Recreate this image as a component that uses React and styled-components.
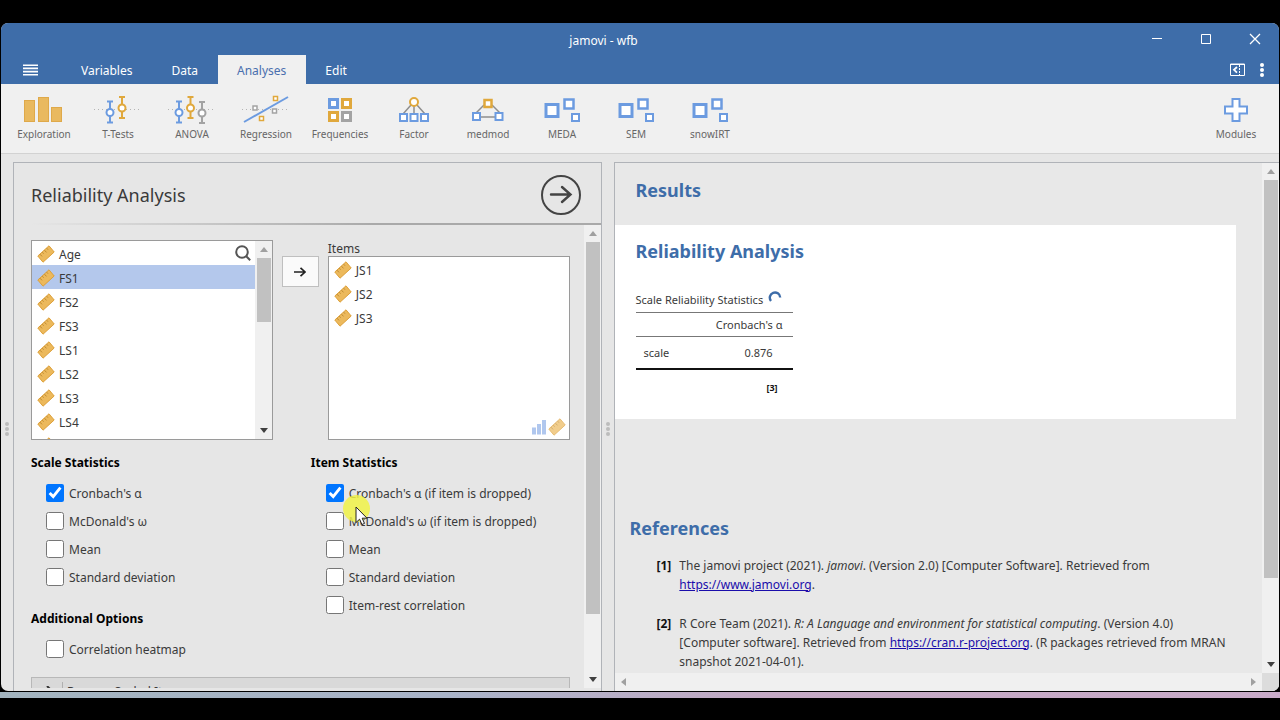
import {useState} from 'react'
import styled, {createGlobalStyle, css} from 'styled-components'

const BLUE = '#6c9be0'
const GOLD = '#e0a83c'
const GREY = '#a3a3a3'

const TABS = ['Variables', 'Data', 'Analyses', 'Edit']

const VARIABLES = ['Age', 'FS1', 'FS2', 'FS3', 'LS1', 'LS2', 'LS3', 'LS4', 'LS5']

const ITEMS = ['JS1', 'JS2', 'JS3']

const SCALE_OPTIONS = [
  {id: 'alphaScale', label: "Cronbach's α", checked: true},
  {id: 'omegaScale', label: "McDonald's ω"},
  {id: 'meanScale', label: 'Mean'},
  {id: 'sdScale', label: 'Standard deviation'},
]

const ITEM_OPTIONS = [
  {id: 'alphaItems', label: "Cronbach's α (if item is dropped)", checked: true},
  {id: 'omegaItems', label: "McDonald's ω (if item is dropped)"},
  {id: 'meanItems', label: 'Mean'},
  {id: 'sdItems', label: 'Standard deviation'},
  {id: 'itemRestCor', label: 'Item-rest correlation'},
]

const ADDITIONAL_OPTIONS = [
  {id: 'corPlot', label: 'Correlation heatmap'},
]

function Whisker({x, y, color}) {
  return (
      <g stroke={color} strokeWidth="2" fill="#fff">
        <path d={`M${x} ${y}v21M${x - 3} ${y}h6M${x - 3} ${y + 21}h6`}/>
        <circle cx={x} cy={y + 11} r="3.5"/>
      </g>
  )
}

function Box({x, y, size, color, width = 2}) {
  return <rect x={x} y={y} width={size} height={size} fill="#fff" stroke={color} strokeWidth={width}/>
}

function Dotted() {
  return <path d="M0 14.5h48" stroke="#b4b4b4" strokeDasharray="1 3"/>
}

const ModuleBoxes = () => (
    <>
      <Box x={8} y={9.5} size={12} color={BLUE} width={3}/>
      <Box x={26.5} y={4.5} size={9} color={BLUE} width={2.5}/>
      <Box x={34} y={19} size={7} color={BLUE}/>
    </>
)

const MODULES = [
  {
    name: 'Exploration',
    art: <g fill="#e9b95f" stroke="#dfa94a">
      <rect x="4.5" y="5.5" width="10" height="21"/>
      <rect x="18.5" y="2.5" width="10" height="24"/>
      <rect x="31.5" y="12.5" width="10" height="14"/>
    </g>
  },
  {
    name: 'T-Tests',
    art: <><Dotted/><Whisker x={16} y={6.5} color={BLUE}/><Whisker x={28} y={2} color={GOLD}/></>
  },
  {
    name: 'ANOVA',
    art: <>
      <Dotted/>
      <Whisker x={11} y={6.5} color={BLUE}/>
      <Whisker x={22.5} y={2} color={GOLD}/>
      <Whisker x={34} y={7} color={GREY}/>
    </>
  },
  {
    name: 'Regression',
    art: <>
      <Dotted/>
      <path d="M2 27L46 2" stroke={BLUE} strokeWidth="2"/>
      <Box x={31.5} y={1.5} size={4} color={GOLD} width={1.5}/>
      <Box x={11} y={11} size={4} color={GREY} width={1.5}/>
      <Box x={30.5} y={14} size={4} color={GREY} width={1.5}/>
      <Box x={17.5} y={21.5} size={4} color={GOLD} width={1.5}/>
    </>
  },
  {
    name: 'Frequencies',
    art: <>
      <Box x={13.5} y={4.5} size={8} color={BLUE} width={3}/>
      <Box x={26.5} y={4.5} size={8} color={GOLD} width={3}/>
      <Box x={13.5} y={17.5} size={8} color={GOLD} width={3}/>
      <Box x={26.5} y={17.5} size={8} color={GREY} width={3}/>
    </>
  },
  {
    name: 'Factor',
    art: <>
      <path d="M24 10v9M21 10L13 19M27 10l8 9" stroke="#8f8f8f" strokeWidth="1.5"/>
      <circle cx="24" cy="7" r="4" fill="#fff" stroke={GOLD} strokeWidth="2"/>
      <Box x={10} y={19} size={7} color={BLUE}/>
      <Box x={20.5} y={19} size={7} color={BLUE}/>
      <Box x={31} y={19} size={7} color={BLUE}/>
    </>
  },
  {
    name: 'medmod',
    art: <>
      <path d="M20 10l-8 8M28 10l8 8M16 22h15" stroke="#8f8f8f" strokeWidth="1.5"/>
      <Box x={20.5} y={5} size={7} color={GOLD} width={2.5}/>
      <Box x={9} y={18} size={7} color={BLUE}/>
      <Box x={31.5} y={18} size={7} color={BLUE}/>
    </>
  },
  {name: 'MEDA', art: <ModuleBoxes/>},
  {name: 'SEM', art: <ModuleBoxes/>},
  {name: 'snowIRT', art: <ModuleBoxes/>},
]

function RibbonItem({name, art}) {
  return (
      <RibbonButton>
        <svg width="48" height="30" viewBox="0 0 48 30" fill="none">{art}</svg>
        {name}
      </RibbonButton>
  )
}

function RulerIcon() {
  return (
      <svg width="18" height="18" viewBox="0 0 18 18">
        <path d="M0.8 11L12 0.8 17.2 7 6 17.2z" fill="#ecb95c" stroke="#dda03a"/>
        <path d="M3 9.2l2 2.2M5.3 7.2l1.3 1.5M7.5 5.2l2 2.2M9.7 3.2L11 4.7" stroke="#b9842c" strokeWidth="0.9"/>
      </svg>
  )
}

function OrdinalIcon() {
  return (
      <svg width="16" height="16" viewBox="0 0 16 16" fill="#8fb0e8">
        <path d="M1 8.5h4v7H1zM6 5h4v10.5H6zM11 1h4v14.5h-4z"/>
      </svg>
  )
}

function Scrollbar({thumb, start = true, end = true}) {
  return (
      <Track>
        <Arrow $active={!start}><svg width="8" height="5"><path d="M0 5l4-5 4 5z"/></svg></Arrow>
        <Slot><Thumb style={{height: thumb}}/></Slot>
        <Arrow $active={end}><svg width="8" height="5"><path d="M0 0l4 5 4-5z"/></svg></Arrow>
      </Track>
  )
}

function OptionGroup({title, options}) {
  return (
      <Group>
        <legend>{title}</legend>
        {options.map(o => (
            <Option key={o.id} htmlFor={o.id}>
              <input type="checkbox" id={o.id} defaultChecked={o.checked}/>
              {o.label}
            </Option>
        ))}
      </Group>
  )
}

function Variable({name, selected, onClick}) {
  return (
      <VariableRow $selected={selected} onClick={onClick}>
        <RulerIcon/>{name}
      </VariableRow>
  )
}

function Options() {
  const [selected, setSelected] = useState('FS1')

  return (
      <OptionsPanel>
        <OptionsHeader>
          <h1>Reliability Analysis</h1>
          <RoundButton aria-label="Close options">
            <svg width="40" height="40" viewBox="0 0 40 40" fill="none" stroke="#444">
              <circle cx="20" cy="20" r="19" strokeWidth="2"/>
              <path d="M10 19.5h19M21 12l8.5 7.5L21 27" strokeWidth="2.4" strokeLinecap="round"/>
            </svg>
          </RoundButton>
        </OptionsHeader>
        <Divider/>
        <ScrollRow>
          <OptionsBody>
            <Supplier>
              <ListBox>
                <List>
                  {VARIABLES.map(v => (
                      <Variable key={v} name={v} selected={v === selected} onClick={() => setSelected(v)}/>
                  ))}
                </List>
                <SearchButton aria-label="Search">
                  <svg width="16" height="16" viewBox="0 0 16 16" fill="none" stroke="#555" strokeWidth="2">
                    <circle cx="7" cy="7" r="5.8"/>
                    <path d="M11 11l4.2 4.2"/>
                  </svg>
                </SearchButton>
                <Scrollbar thumb="64px"/>
              </ListBox>
              <MoveButton aria-label="Move to Items">
                <svg width="12" height="10" viewBox="0 0 12 10" fill="none" stroke="#222" strokeWidth="1.7">
                  <path d="M0 5h11M6.5 0.8L11 5 6.5 9.2"/>
                </svg>
              </MoveButton>
              <Target>
                <TargetLabel>Items</TargetLabel>
                <ListBox>
                  <List>
                    {ITEMS.map(v => <Variable key={v} name={v}/>)}
                  </List>
                  <Permitted><OrdinalIcon/><RulerIcon/></Permitted>
                </ListBox>
              </Target>
            </Supplier>
            <Columns>
              <div>
                <OptionGroup title="Scale Statistics" options={SCALE_OPTIONS}/>
                <OptionGroup title="Additional Options" options={ADDITIONAL_OPTIONS}/>
              </div>
              <OptionGroup title="Item Statistics" options={ITEM_OPTIONS}/>
            </Columns>
            <Collapse>
              <svg width="8" height="10" viewBox="0 0 8 10" fill="none" stroke="#333" strokeWidth="2">
                <path d="M1 0l5 5-5 5"/>
              </svg>
              <span>Reverse Scaled Items</span>
            </Collapse>
          </OptionsBody>
          <Scrollbar thumb="372px"/>
        </ScrollRow>
      </OptionsPanel>
  )
}

function Results() {
  return (
      <ResultsPanel>
        <ScrollRow>
          <ResultsBody>
            <ResultsTitle>Results</ResultsTitle>
            <Card>
              <Heading>Reliability Analysis</Heading>
              <Table>
                <caption>
                  Scale Reliability Statistics
                  <svg width="14" height="14" viewBox="0 0 14 14" fill="none" stroke="#3e6da9" strokeWidth="2.4">
                    <path d="M3 11A5.2 5.2 0 1 1 12.2 7.5"/>
                  </svg>
                </caption>
                <thead>
                  <tr><th/><th>Cronbach's α</th></tr>
                </thead>
                <tbody>
                  <tr><td>scale</td><td>0.876</td></tr>
                </tbody>
                <tfoot>
                  <tr><td colSpan="2">[3]</td></tr>
                </tfoot>
              </Table>
            </Card>
            <References>
              <Heading>References</Heading>
              <Reference>
                <b>[1]</b>
                <p>The jamovi project (2021). <i>jamovi</i>. (Version 2.0) [Computer Software]. Retrieved
                  from <a href="https://www.jamovi.org">https://www.jamovi.org</a>.</p>
              </Reference>
              <Reference>
                <b>[2]</b>
                <p>R Core Team (2021). <i>R: A Language and environment for statistical computing</i>. (Version 4.0)
                  [Computer software]. Retrieved from <a href="https://cran.r-project.org">https://cran.r-project.org</a>.
                  (R packages retrieved from MRAN snapshot 2021-04-01).</p>
              </Reference>
            </References>
          </ResultsBody>
          <Scrollbar thumb="398px"/>
        </ScrollRow>
        <HorizontalBar>
          <svg width="5" height="8"><path d="M5 0L0 4l5 4z"/></svg>
          <svg width="5" height="8"><path d="M0 0l5 4-5 4z"/></svg>
        </HorizontalBar>
      </ResultsPanel>
  )
}

export default function App() {
  return (
      <Desktop>
        <GlobalStyle/>
        <Window>
          <TitleBar>
            <WindowTitle>jamovi - wfb</WindowTitle>
            <WindowButton aria-label="Minimize">
              <svg width="12" height="12"><path d="M1 5.5h10"/></svg>
            </WindowButton>
            <WindowButton aria-label="Maximize">
              <svg width="12" height="12"><path d="M1.5 1.5h9v9h-9z"/></svg>
            </WindowButton>
            <WindowButton aria-label="Close">
              <svg width="12" height="12"><path d="M1 1l10 10M11 1L1 11" strokeWidth="1.3"/></svg>
            </WindowButton>
          </TitleBar>
          <TabBar>
            <MenuButton aria-label="Menu">
              <svg width="15" height="12" viewBox="0 0 15 12">
                <path d="M0 1.2h15M0 4.4h15M0 7.6h15M0 10.8h15"/>
              </svg>
            </MenuButton>
            {TABS.map(t => <Tab key={t} $active={t === 'Analyses'}>{t}</Tab>)}
            <TabTools>
              <button aria-label="Toggle results">
                <svg width="15" height="13" viewBox="0 0 15 13">
                  <path d="M0.5 1h14v11.5h-14zM0 1.5h15" strokeWidth="1"/>
                  <path d="M9.5 2v11" strokeDasharray="2 1"/>
                  <path d="M7 4L4 6.8l3 2.8" strokeWidth="1.8"/>
                </svg>
              </button>
              <button aria-label="More">
                <svg width="4" height="14" viewBox="0 0 4 14">
                  <g fill="#fff" stroke="none">
                    <circle cx="2" cy="2" r="2"/>
                    <circle cx="2" cy="7" r="2"/>
                    <circle cx="2" cy="12" r="2"/>
                  </g>
                </svg>
              </button>
            </TabTools>
          </TabBar>
          <Ribbon>
            {MODULES.map(m => <RibbonItem key={m.name} name={m.name} art={m.art}/>)}
            <Spacer/>
            <RibbonItem
                name="Modules"
                art={<path d="M20.5 4h7v7.5H35v7h-7.5V26h-7v-7.5H13v-7h7.5z" fill="#fff" stroke={BLUE} strokeWidth="2"/>}
            />
          </Ribbon>
          <Main>
            <Splitter><i/><i/><i/></Splitter>
            <Options/>
            <Splitter><i/><i/><i/></Splitter>
            <Results/>
          </Main>
        </Window>
        <Wallpaper/>
        <Pointer>
          <svg width="14" height="20" viewBox="0 0 14 20">
            <path d="M1 1v15.5l3.6-3.3 2.3 5.3 2.6-1.1-2.3-5.2H12z" fill="#fff" stroke="#222"/>
          </svg>
        </Pointer>
      </Desktop>
  )
}

const GlobalStyle = createGlobalStyle`
  * {
    box-sizing: border-box;
  }

  body {
    margin: 0;
    background: #000;
    color: #3a3a3a;
    font-family: "Noto Sans", "Open Sans", sans-serif;
    font-size: 12px;
    line-height: 19px;
  }

  button {
    font: inherit;
    color: inherit;
    padding: 0;
    border: 0;
    background: none;
  }

  h1, h2, p {
    margin: 0;
  }

  svg {
    display: block;
    flex-shrink: 0;
  }
`

const Desktop = styled.div`
  position: relative;
  display: flex;
  flex-direction: column;
  height: 100vh;
  padding: 23px 0 22px;
`
const Window = styled.div`
  display: flex;
  flex-direction: column;
  flex: 1;
  min-height: 0;
  margin: 0 1px;
  border-radius: 7px;
  overflow: hidden;
  background: #e6e6e6;
`
const Wallpaper = styled.div`
  height: 6px;
  margin-top: 1px;
  background: linear-gradient(90deg, #a3b4bf, #a9b3c8 35%, #c4a9c4 60%, #c8aac8);
`
const TitleBar = styled.header`
  display: flex;
  height: 32px;
  padding-left: 74px;
  background: #3e6da9;
  color: #fff;
`
const WindowTitle = styled.div`
  flex: 1;
  text-align: center;
  line-height: 35px;
`
const WindowButton = styled.button`
  display: flex;
  align-items: center;
  justify-content: center;
  width: 49px;

  svg {
    fill: none;
    stroke: #fff;
  }
`
const TabBar = styled.nav`
  display: flex;
  height: 29px;
  background: #3e6da9;
  color: #fff;
`
const MenuButton = styled.button`
  width: 61px;
  padding-left: 22px;

  svg {
    stroke: #fff;
    stroke-width: 1.6;
  }
`
const Tab = styled.button`
  padding: 1px 20px 0 19px;

  ${p => p.$active && css`
    background: #f0f0f0;
    color: #4a6fae;
  `}
`
const TabTools = styled.div`
  display: flex;
  gap: 15px;
  margin-left: auto;
  padding-right: 15px;

  svg {
    fill: none;
    stroke: #fff;
  }
`
const Ribbon = styled.div`
  display: flex;
  height: 70px;
  padding: 0 6px;
  background: #f0f0f0;
  border-bottom: 1px solid #d2d2d2;
`
const RibbonButton = styled.button`
  display: flex;
  flex-direction: column;
  align-items: center;
  width: 74px;
  padding-top: 11px;
  font-size: 10px;
  line-height: 18px;
  color: #666;
`
const Spacer = styled.div`
  flex: 1;
`
const Main = styled.main`
  display: flex;
  flex: 1;
  min-height: 0;
  padding-top: 8px;
`
const Splitter = styled.div`
  display: flex;
  flex-direction: column;
  align-items: center;
  justify-content: center;
  gap: 1px;
  flex: 0 0 12px;
  padding-top: 4px;

  i {
    width: 4px;
    height: 4px;
    border-radius: 50%;
    background: #bcbcbc;
  }
`
const OptionsPanel = styled.section`
  display: flex;
  flex-direction: column;
  flex: 587 0 0;
  min-width: 0;
  padding-bottom: 3px;
  border: 1px solid #b0b3b8;
  border-bottom: 0;
`
const OptionsHeader = styled.div`
  display: flex;
  align-items: center;
  justify-content: space-between;
  height: 60px;
  padding: 4px 20px 0 17px;

  h1 {
    font-size: 18px;
    font-weight: 400;
    line-height: 26px;
  }
`
const RoundButton = styled.button`
  border-radius: 50%;
`
const Divider = styled.div`
  height: 2px;
  margin-left: 17px;
  background: linear-gradient(90deg, #e6e6e6, #a9a9a9 60%);
`
const ScrollRow = styled.div`
  display: flex;
  flex: 1;
  min-height: 0;
`
const OptionsBody = styled.div`
  flex: 1;
  min-width: 0;
  overflow: hidden;
  padding: 15px 14px 0 17px;
`
const Supplier = styled.div`
  display: grid;
  grid-template-columns: 1fr 55px 1fr;
  height: 200px;
`
const ListBox = styled.div`
  position: relative;
  display: flex;
  flex: 1;
  min-height: 0;
  background: #fff;
  border: 1px solid #9a9a9a;
`
const List = styled.ul`
  flex: 1;
  margin: 0;
  padding: 0;
  overflow: hidden;
  list-style: none;
`
const VariableRow = styled.li`
  display: flex;
  align-items: center;
  gap: 4px;
  height: 24px;
  padding: 2px 0 0 5px;
  background: ${p => p.$selected ? '#b4c8ec' : 'transparent'};
`
const SearchButton = styled.button`
  position: absolute;
  top: 4px;
  right: 21px;
`
const MoveButton = styled.button`
  display: flex;
  align-items: center;
  justify-content: center;
  width: 37px;
  height: 31px;
  margin: 16px auto 0;
  background: #fafafa;
  border: 1px solid #bfbfbf;
`
const Target = styled.div`
  display: flex;
  flex-direction: column;
`
const TargetLabel = styled.div`
  height: 16px;
  line-height: 18px;
`
const Permitted = styled.div`
  position: absolute;
  right: 3px;
  bottom: 3px;
  display: flex;
  align-items: center;
  gap: 1px;
  opacity: 0.7;
`
const Columns = styled.div`
  display: grid;
  grid-template-columns: 280fr 259fr;
`
const Group = styled.fieldset`
  min-width: 0;
  margin: 0;
  padding: 12px 0 5px;
  border: 0;

  legend {
    float: left;
    width: 100%;
    padding: 0;
    margin-bottom: 5px;
    color: #000;
    font-weight: 700;
    line-height: 22px;
  }
`
const Option = styled.label`
  display: flex;
  align-items: center;
  gap: 5px;
  clear: both;
  height: 28px;
  padding-left: 15px;

  input {
    width: 18px;
    height: 18px;
    margin: 0;
  }
`
const Collapse = styled.button`
  display: flex;
  align-items: center;
  gap: 8px;
  width: 100%;
  height: 28px;
  margin-top: 9px;
  padding-left: 14px;
  background: #d9d9d9;
  border: 1px solid #b8b8b8;

  span {
    padding-left: 4px;
    border-left: 1px solid #b0b0b0;
  }
`
const Track = styled.div`
  display: flex;
  flex-direction: column;
  flex: 0 0 17px;
  background: #f0f0f0;
`
const Arrow = styled.div`
  display: flex;
  align-items: center;
  justify-content: center;
  height: 17px;
  padding-left: 1px;
  fill: ${p => p.$active ? '#404040' : '#a0a0a0'};
`
const Slot = styled.div`
  flex: 1;
  min-height: 0;
  padding: 0 1px 0 2px;
`
const Thumb = styled.div`
  background: #c1c1c1;
`
const ResultsPanel = styled.section`
  display: flex;
  flex-direction: column;
  flex: 665 0 0;
  min-width: 0;
  border: 1px solid #b0b3b8;
  border-right: 0;
  border-bottom: 0;
`
const ResultsBody = styled.div`
  flex: 1;
  min-width: 0;
  overflow: hidden;
  padding-right: 26px;
  background: #e8e8e8;
`
const Heading = styled.h2`
  color: #3e6da9;
  font-size: 18px;
  font-weight: 700;
  line-height: 26px;
`
const ResultsTitle = styled(Heading)`
  padding: 14px 21px 22px;
`
const Card = styled.div`
  padding: 13px 21px 14px;
  background: #fff;
`
const Table = styled.table`
  width: 157px;
  margin-top: 26px;
  border-collapse: collapse;
  white-space: nowrap;
  font-size: 11px;

  caption {
    height: 22px;
    text-align: left;
  }

  caption svg {
    display: inline;
    margin-left: 5px;
  }

  thead tr {
    height: 24px;
    border-top: 1px solid #777;
    border-bottom: 1px solid #777;
  }

  th {
    padding: 0 10px 0 0;
    text-align: right;
    font-weight: 400;
  }

  tbody tr {
    height: 32px;
    border-bottom: 2px solid #111;
  }

  td {
    padding: 0 20px 0 8px;
  }

  td + td {
    text-align: right;
    padding-left: 0;
  }

  tfoot td {
    height: 36px;
    padding-right: 15px;
    text-align: right;
    color: #111;
    font-size: 9px;
    font-weight: 700;
  }
`
const References = styled.div`
  padding: 96px 8px 0 15px;
`
const Reference = styled.div`
  display: flex;
  gap: 8px;
  margin: 15px 0 20px 27px;

  b {
    color: #111;
  }

  a {
    color: #1a0dab;
  }
`
const HorizontalBar = styled.div`
  display: flex;
  align-items: center;
  justify-content: space-between;
  height: 18px;
  padding: 0 6px;
  border-right: 17px solid #dcdcdc;
  background: #f0f0f0;
  fill: #a0a0a0;
`
const Pointer = styled.div`
  position: absolute;
  top: 495px;
  left: 343px;
  width: 27px;
  height: 27px;
  padding: 11px 0 0 12px;
  border-radius: 50%;
  background: rgba(240, 242, 70, 0.85);
  pointer-events: none;
`
